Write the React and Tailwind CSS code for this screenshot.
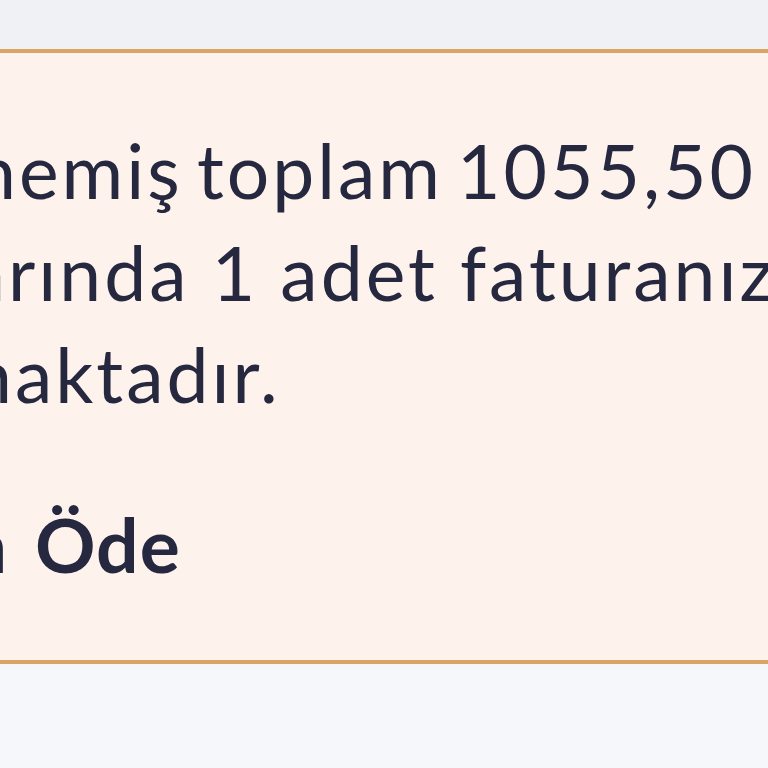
import React from 'react';

const lines = [
  { hidden: 'ödenm', shown: 'emiş toplam 1055,50 TL', cut: 19, spacing: '[word-spacing:-8px]' },
  { hidden: 'tuta', shown: 'rında 1 adet faturanız bulunmaktadır.', cut: 8, spacing: '[word-spacing:0px]' },
  { hidden: 'bulunm', shown: 'aktadır.', cut: 15, spacing: '[word-spacing:0px]' },
];

const Line = ({ hidden, shown, cut, spacing }) => (
  <div className={`flex whitespace-nowrap ${spacing}`}>
    <span className="shrink-0 text-right" style={{ width: 400, marginLeft: cut - 400 }}>
      {hidden}
    </span>
    <span>{shown}</span>
  </div>
);

export default function App() {
  return (
    <div
      className="w-[768px] h-[768px] overflow-hidden bg-[#f6f7fa] text-[#262840]"
      style={{ fontFamily: 'Lato, "Noto Sans", sans-serif' }}
    >
      <div className="h-[49px] bg-[#f0f1f4]" />
      <div className="border-y-4 border-[#dba465] bg-[#fdf3ec] pt-[66px] pb-[65px] text-[75px] leading-[102px] tracking-[3px]">
        {lines.map((l, i) => (
          <Line key={i} {...l} />
        ))}
        <div className="mt-[68px] flex whitespace-nowrap font-bold tracking-[1px]">
          <span className="shrink-0 text-right" style={{ width: 400, marginLeft: 8 - 400 }}>
            Hemen
          </span>
          <span className="ml-[27px]">Öde</span>
        </div>
      </div>
    </div>
  );
}
